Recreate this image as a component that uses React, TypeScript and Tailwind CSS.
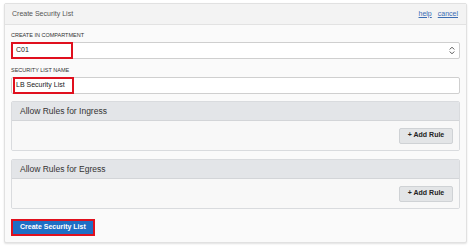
import React from "react";

function Chevrons() {
  return (
    <svg width="6" height="9" viewBox="0 0 6 9" fill="none" stroke="#555" strokeWidth="1" strokeLinecap="round" strokeLinejoin="round">
      <path d="M1 3.2 L3 1.2 L5 3.2" />
      <path d="M1 5.8 L3 7.8 L5 5.8" />
    </svg>
  );
}

function RuleSection({ title }: { title: string }) {
  return (
    <div className="border border-[#d9dbde] rounded-[2px] overflow-hidden">
      <div className="h-[19px] bg-[#e3e5e8] border-b border-[#d3d5d8] flex items-center pl-[8px] text-[8.5px] text-[#333]">
        {title}
      </div>
      <div className="h-[29px] bg-[#f8f8f8] flex items-center justify-end pr-[6px]">
        <button className="h-[16px] w-[54px] bg-[#e3e5e7] border border-[#cfd2d5] rounded-[2px] text-[7px] font-bold text-[#222] flex items-center justify-center">
          + Add Rule
        </button>
      </div>
    </div>
  );
}

export default function App() {
  return (
    <div
      className="w-[474px] h-[248px] bg-white pt-[3px] pl-[4px]"
      style={{ fontFamily: '"Liberation Sans", Arial, sans-serif' }}
    >
      <div className="w-[463px] h-[240px] border border-[#e1e1e1] bg-[#fafafa] shadow-[0_1px_2px_rgba(0,0,0,0.12)] rounded-[2px]">
        <div className="h-[21px] bg-[#f3f3f3] border-b border-[#e2e2e2] flex items-center justify-between pl-[7px] pr-[8px]">
          <span className="text-[7px] text-[#555]">Create Security List</span>
          <div className="flex gap-[6px] text-[7px] text-[#3b6db3]">
            <span className="underline">help</span>
            <span className="underline">cancel</span>
          </div>
        </div>
        <div className="px-[6px]">
          <div className="mt-[6px] h-[8px] leading-[8px] text-[5.5px] text-[#333]">CREATE IN COMPARTMENT</div>
          <div className="relative mt-[3px] h-[17px] bg-white border border-[#cfcfcf] rounded-[2px] flex items-center justify-between pl-[4px] pr-[4px]">
            <span className="text-[7px] text-[#222]">C01</span>
            <Chevrons />
            <div className="absolute left-[-1px] top-[-1px] w-[62px] h-[17px] border-2 border-[#e0101e]" />
          </div>
          <div className="mt-[7px] h-[8px] leading-[8px] text-[5.5px] text-[#333]">SECURITY LIST NAME</div>
          <div className="relative mt-[3px] h-[17px] bg-white border border-[#cfcfcf] rounded-[2px] flex items-center pl-[4px]">
            <span className="text-[7px] text-[#222]">LB Security List</span>
            <div className="absolute left-[1px] top-[-1px] w-[61px] h-[17px] border-2 border-[#e0101e]" />
          </div>
          <div className="mt-[7px]">
            <RuleSection title="Allow Rules for Ingress" />
          </div>
          <div className="mt-[8px]">
            <RuleSection title="Allow Rules for Egress" />
          </div>
          <div className="mt-[10px] inline-flex border-2 border-[#e0101e]">
            <button className="h-[13px] px-[7px] bg-[#1f6ec4] text-white text-[7px] font-bold flex items-center">
              Create Security List
            </button>
          </div>
        </div>
      </div>
    </div>
  );
}
